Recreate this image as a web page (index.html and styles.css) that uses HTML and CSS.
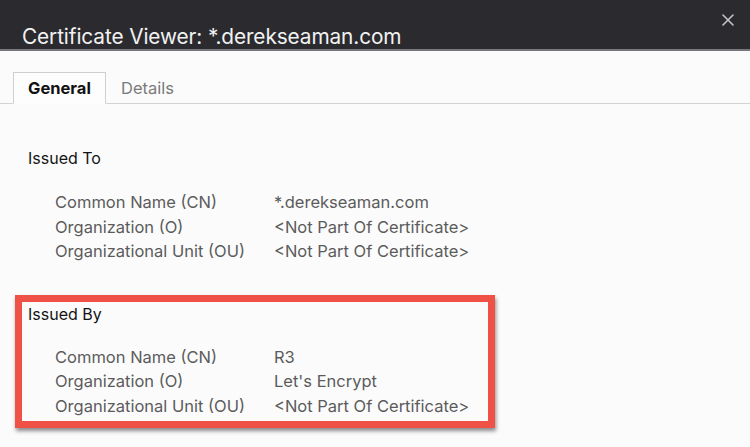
FILE: index.html
```html
<!DOCTYPE html>
<html>
<head>
<meta charset="utf-8">
<link rel="stylesheet" href="styles.css">
</head>
<body>
<div class="dialog">
  <header class="titlebar">
    <h1 class="title">Certificate Viewer: *.derekseaman.com</h1>
    <button class="close" aria-label="Close">
      <svg width="12" height="12" viewBox="0 0 12 12"><path d="M1 1 L11 11 M11 1 L1 11" stroke="#c4c4c6" stroke-width="1.6" stroke-linecap="round"/></svg>
    </button>
  </header>
  <nav class="tabs">
    <div class="tab active">General</div>
    <div class="tab">Details</div>
  </nav>
  <main class="content">
    <section class="section first">
      <h2 class="heading">Issued To</h2>
      <div class="rows">
        <div class="label">Common Name (CN)</div><div class="value">*.derekseaman.com</div>
        <div class="label">Organization (O)</div><div class="value">&lt;Not Part Of Certificate&gt;</div>
        <div class="label">Organizational Unit (OU)</div><div class="value">&lt;Not Part Of Certificate&gt;</div>
      </div>
    </section>
    <section class="section highlight">
      <h2 class="heading">Issued By</h2>
      <div class="rows">
        <div class="label">Common Name (CN)</div><div class="value">R3</div>
        <div class="label">Organization (O)</div><div class="value">Let's Encrypt</div>
        <div class="label">Organizational Unit (OU)</div><div class="value">&lt;Not Part Of Certificate&gt;</div>
      </div>
    </section>
  </main>
</div>
</body>
</html>
```
FILE: styles.css
```css
* { box-sizing: border-box; }
html, body { margin: 0; padding: 0; }
body {
  width: 750px;
  height: 447px;
  overflow: hidden;
  background: #fbfbfb;
  font-family: Inter, "Liberation Sans", sans-serif;
}
.titlebar {
  height: 51px;
  background: #2b2a2f;
  border-bottom: 2px solid #77777a;
  display: flex;
  justify-content: space-between;
  align-items: flex-start;
}
.title {
  margin: 0;
  padding: 25px 0 0 22px;
  font-size: 20.8px;
  line-height: 24px;
  font-weight: 400;
  color: #f2f2f2;
  letter-spacing: -0.1px;
}
.close {
  background: none;
  border: 0;
  padding: 0;
  margin: 14px 16px 0 0;
  width: 12px;
  height: 12px;
  display: flex;
}
.tabs {
  display: flex;
  padding: 21px 0 0 13px;
  border-bottom: 1px solid #d3d3d3;
  height: 53px;
}
.tab {
  height: 32px;
  padding: 6px 15px 0 15px;
  font-size: 16.5px;
  line-height: 20px;
  color: #7a7a7a;
  margin-bottom: -1px;
}
.tab.active {
  color: #111;
  font-weight: 700;
  background: #fdfdfd;
  border: 1px solid #cfcfcf;
  border-bottom-color: #fdfdfd;
  padding: 5px 14px 0 14px;
  width: 93px;
}
.content {
  padding: 42px 0 0 15px;
}
.heading {
  margin: 0;
  font-size: 16px;
  font-weight: 400;
  line-height: 24px;
  color: #141414;
}
.section.first {
  padding-left: 13px;
}
.rows {
  display: grid;
  grid-template-columns: 219px auto;
  margin: 20px 0 0 27px;
  font-size: 16.5px;
  line-height: 24.5px;
  color: #5b5b5b;
}
.highlight {
  margin-top: 31px;
  width: 480px;
  border: 7px solid #ef5147;
  padding: 0 0 3px 6px;
  box-shadow: 1px 3px 4px rgba(0, 0, 0, 0.45);
}
.highlight .rows {
  margin-top: 19px;
}
```
